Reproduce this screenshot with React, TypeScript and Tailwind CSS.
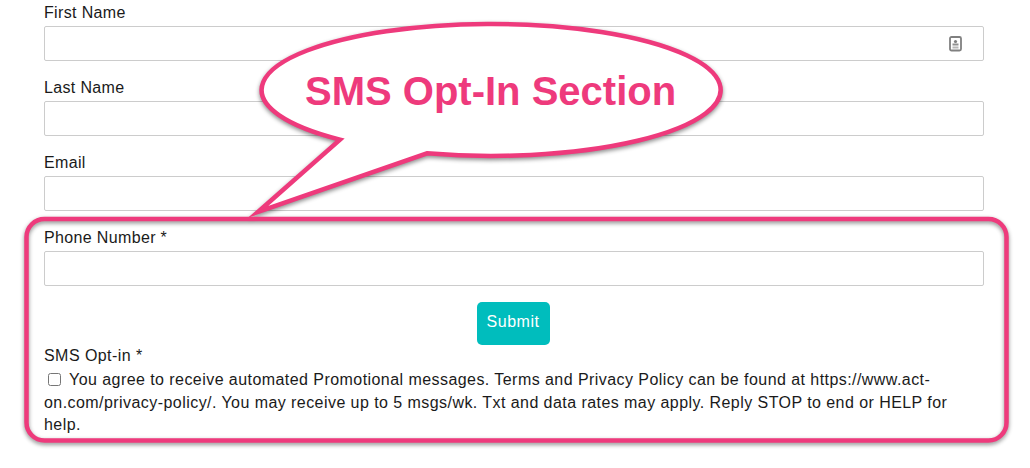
import React from "react";

function Field({ label, icon }: { label: string; icon?: boolean }) {
  return (
    <div className="mb-[14px]">
      <label className="block h-[26px] leading-[25px] text-[16px] tracking-[0.35px] text-[#1a1a1a]">{label}</label>
      <div className="relative h-[35px] w-full rounded-[2px] border border-[#cccccc] bg-white">
        {icon && (
          <svg className="absolute right-[20px] top-[9px]" width="14" height="16" viewBox="0 0 14 16" fill="none">
            <rect x="1" y="1" width="11" height="13.5" rx="1.5" stroke="#808080" strokeWidth="1.8" />
            <circle cx="6.5" cy="5.5" r="1.6" fill="#808080" />
            <rect x="3.5" y="7.5" width="6" height="2" fill="#909090" />
            <rect x="3.5" y="10.5" width="6" height="2" fill="#b8b8b8" />
          </svg>
        )}
      </div>
    </div>
  );
}

export default function App() {
  return (
    <div className="relative h-[468px] w-[1030px] overflow-hidden bg-white font-['Liberation_Sans',Arial,sans-serif]">
      <div className="w-[984px] pl-[44px]">
        <Field label="First Name" icon />
        <Field label="Last Name" />
        <Field label="Email" />
        <Field label="Phone Number *" />
        <div className="mt-[16px] flex justify-center">
          <button className="ml-[-2px] h-[43px] w-[73px] rounded-[5px] bg-[#00bdbd] pb-[3px] text-[16px] tracking-[0.5px] text-white">Submit</button>
        </div>
        <div className="text-[16px] tracking-[0.44px] text-[#1a1a1a]">
          <div className="h-[22px] leading-[22px]">SMS Opt-in *</div>
          <p className="mt-[2px] w-[910px] leading-[22.5px]">
            <input type="checkbox" className="ml-[4px] mr-[8px] h-[13px] w-[13px] align-[-1px]" />
            You agree to receive automated Promotional messages. Terms and Privacy Policy can be found at https://www.act-on.com/privacy-policy/. You may receive up to 5 msgs/wk. Txt and data rates may apply. Reply STOP to end or HELP for help.
          </p>
        </div>
      </div>

      <svg className="pointer-events-none absolute left-0 top-0 drop-shadow-[0_2px_2px_rgba(0,0,0,0.45)]" width="1030" height="468" viewBox="0 0 1030 468" fill="none">
        <rect x="26.5" y="219" width="980" height="221.5" rx="18" stroke="#ee3a7c" strokeWidth="4.5" />
        <path
          d="M340 139.6 A 229.5 66 0 1 1 427 153.3 L 258 212 Z"
          fill="white"
          stroke="#ee3a7c"
          strokeWidth="4.5"
          strokeLinejoin="miter"
          strokeMiterlimit="12"
        />
      </svg>
      <div className="absolute left-[305px] top-[69px] whitespace-nowrap text-[40px] leading-[44px] font-bold text-[#ee3a7c]">SMS Opt-In Section</div>
    </div>
  );
}
